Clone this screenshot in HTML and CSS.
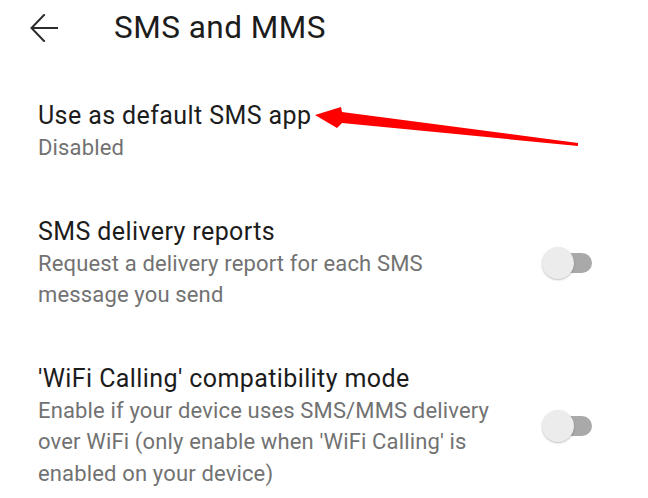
FILE: index.html
```html
<!DOCTYPE html>
<html lang="en">
<head>
<meta charset="utf-8">
<title>SMS and MMS</title>
<link rel="stylesheet" href="styles.css">
</head>
<body>
<div class="screen">
  <header class="appbar">
    <button class="back" aria-label="Back">
      <svg width="28" height="28" viewBox="0 0 28 28" fill="none" stroke="#2b2b2b" stroke-width="2" stroke-linecap="square">
        <path d="M27 14H3"/>
        <path d="M14 1L1.5 14L14 27"/>
      </svg>
    </button>
    <h1 class="title">SMS and MMS</h1>
  </header>

  <ul class="prefs">
    <li class="pref pref-first">
      <div class="pref-text">
        <div class="pref-title">Use as default SMS app</div>
        <div class="pref-summary">Disabled</div>
      </div>
    </li>
    <li class="pref">
      <div class="pref-text">
        <div class="pref-title">SMS delivery reports</div>
        <div class="pref-summary">Request a delivery report for each SMS<br>message you send</div>
      </div>
      <span class="switch"><span class="track"></span><span class="thumb"></span></span>
    </li>
    <li class="pref">
      <div class="pref-text">
        <div class="pref-title">'WiFi Calling' compatibility mode</div>
        <div class="pref-summary">Enable if your device uses SMS/MMS delivery<br>over WiFi (only enable when 'WiFi Calling' is<br>enabled on your device)</div>
      </div>
      <span class="switch"><span class="track"></span><span class="thumb"></span></span>
    </li>
  </ul>

  <svg class="pointer" width="648" height="498" viewBox="0 0 648 498">
    <polygon fill="#ff0000" points="315,115 341,107 342,112 578,143 578,146 342,123 337,128"/>
  </svg>
</div>
</body>
</html>
```

FILE: styles.css
```css
* {
  box-sizing: border-box;
}

html, body {
  margin: 0;
  padding: 0;
  background: #ffffff;
}

body {
  font-family: Roboto, "Noto Sans", "Liberation Sans", sans-serif;
  color: #1c1c1c;
  width: 648px;
  height: 498px;
  overflow: hidden;
}

.screen {
  position: relative;
  width: 648px;
  height: 498px;
}

.appbar {
  display: flex;
  align-items: center;
  height: 56px;
  padding-left: 30px;
}

.back {
  display: flex;
  align-items: center;
  justify-content: center;
  width: 28px;
  height: 28px;
  padding: 0;
  border: 0;
  background: none;
}

.title {
  margin: 0 0 0 56px;
  font-size: 31.5px;
  font-weight: 400;
  letter-spacing: 0.5px;
  line-height: 38px;
  color: #1c1c1c;
}

.prefs {
  list-style: none;
  margin: 0;
  padding: 0;
}

.pref {
  display: flex;
  align-items: center;
  padding: 26px 56px 26px 38px;
}

.pref-first {
  padding-top: 44px;
}

.pref-text {
  flex: 1;
}

.pref-title {
  font-size: 25px;
  letter-spacing: 0.4px;
  line-height: 32px;
  color: #1c1c1c;
}

.pref-summary {
  font-size: 22px;
  letter-spacing: 0.15px;
  line-height: 31.5px;
  color: #727272;
}

.switch {
  position: relative;
  width: 50px;
  height: 32px;
  flex: none;
}

.track {
  position: absolute;
  right: 0;
  top: 6px;
  width: 47px;
  height: 20px;
  border-radius: 10px;
  background: #a9a9a9;
}

.thumb {
  position: absolute;
  left: 0;
  top: 0;
  width: 32px;
  height: 32px;
  border-radius: 50%;
  background: #ececec;
  box-shadow: 0 1px 2px rgba(0, 0, 0, 0.25);
}

.pointer {
  position: absolute;
  left: 0;
  top: 0;
  pointer-events: none;
}
```
